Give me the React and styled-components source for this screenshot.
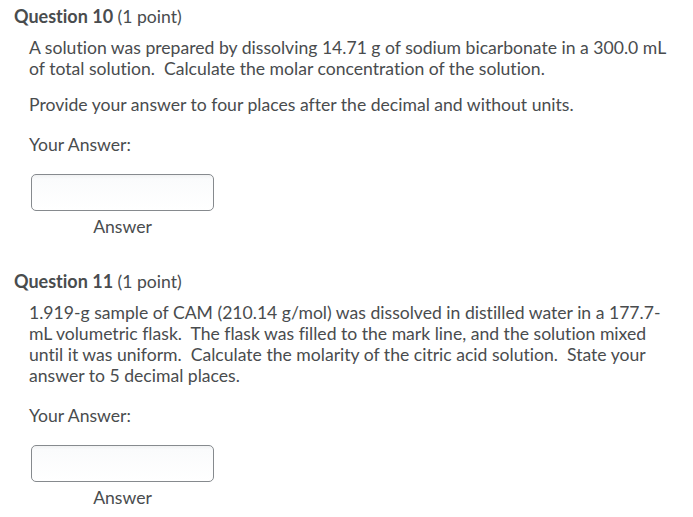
import React from 'react'
import styled, { createGlobalStyle } from 'styled-components'

const GlobalStyle = createGlobalStyle`
  body {
    margin: 0;
    background: #ffffff;
    font-family: Lato, "Liberation Sans", sans-serif;
    color: #494c4e;
    font-variant-ligatures: none;
  }
`

const Page = styled.div`
  padding: 6px 14px 0 14px;
  width: 693px;
  box-sizing: border-box;
`

const Question = styled.section`
  margin-bottom: ${p => p.$gap || 0}px;
`

const Title = styled.h2`
  margin: 0;
  font-size: 18px;
  line-height: 21px;
  font-weight: 700;
  color: #494c4e;
  span {
    font-size: 17.6px;
    font-weight: 400;
  }
`

const Body = styled.div`
  padding-left: 15px;
  margin-top: 10px;
`

const Para = styled.p`
  margin: 0 0 ${p => p.$after || 0}px 0;
  font-size: 17.6px;
  line-height: 21px;
`

const Label = styled.div`
  font-size: 17.6px;
  line-height: 21px;
`

const AnswerField = styled.div`
  display: flex;
  flex-direction: column;
  align-items: center;
  width: 183px;
  margin: 19px 0 0 2px;
`

const Box = styled.input`
  width: 183px;
  height: 37px;
  box-sizing: border-box;
  border: 1px solid #868a8e;
  border-radius: 5px;
  background: linear-gradient(#f1f2f3, #fafbfc 4px, #ffffff);
  outline: none;
`

const Caption = styled.div`
  margin-top: 5px;
  font-size: 17.6px;
  line-height: 21px;
`

const QuestionBlock = ({ num, paras, gap }) => (
  <Question $gap={gap}>
    <Title>Question {num} <span>(1 point)</span></Title>
    <Body>
      {paras.map((p, i) => (
        <Para key={i} $after={i === paras.length - 1 ? 19 : 15}>{p}</Para>
      ))}
      <Label>Your Answer:</Label>
      <AnswerField>
        <Box type="text" aria-label="Answer" />
        <Caption>Answer</Caption>
      </AnswerField>
    </Body>
  </Question>
)

export default function App() {
  return (
    <>
      <GlobalStyle />
      <Page>
        <QuestionBlock
          num={10}
          gap={34}
          paras={[
            <>A solution was prepared by dissolving 14.71 g of sodium bicarbonate in a 300.0 mL<br />of total solution.&nbsp; Calculate the molar concentration of the solution.</>,
            'Provide your answer to four places after the decimal and without units.',
          ]}
        />
        <QuestionBlock
          num={11}
          paras={[
            <>1.919-g sample of CAM (210.14 g/mol) was dissolved in distilled water in a 177.7-<br />mL volumetric flask.&nbsp; The flask was filled to the mark line, and the solution mixed<br />until it was uniform.&nbsp; Calculate the molarity of the citric acid solution.&nbsp; State your<br />answer to 5 decimal places.</>,
          ]}
        />
      </Page>
    </>
  )
}
